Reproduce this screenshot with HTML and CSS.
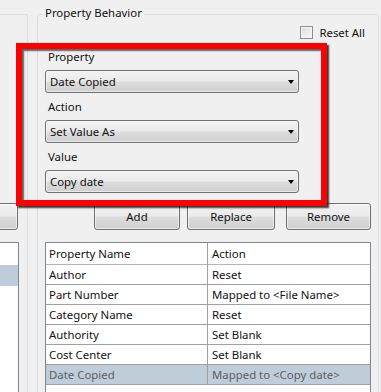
FILE: index.html
```html
<!DOCTYPE html>
<html>
<head>
<meta charset="utf-8">
<link rel="stylesheet" href="styles.css">
</head>
<body>
<div class="screen">
  <div class="left-group">
    <div class="win-btn left-btn"></div>
    <div class="left-list">
      <div class="ll-head"></div>
      <div class="ll-row selected"></div>
    </div>
  </div>

  <div class="group">
    <span class="legend">Property Behavior</span>
    <div class="reset-row">
      <span class="checkbox"></span>
      <span class="reset-text">Reset All</span>
    </div>

    <div class="field-label">Property</div>
    <div class="combo"><span class="combo-text">Date Copied</span><span class="arrow"></span></div>

    <div class="field-label">Action</div>
    <div class="combo"><span class="combo-text">Set Value As</span><span class="arrow"></span></div>

    <div class="field-label">Value</div>
    <div class="combo"><span class="combo-text">Copy date</span><span class="arrow"></span></div>

    <div class="buttons">
      <div class="win-btn btn-add">Add</div>
      <div class="win-btn btn-replace">Replace</div>
      <div class="win-btn btn-remove">Remove</div>
    </div>

    <div class="grid">
      <table>
        <colgroup><col class="col-name"><col class="col-action"></colgroup>
        <thead>
          <tr><th>Property Name</th><th>Action</th></tr>
        </thead>
        <tbody>
          <tr><td>Author</td><td>Reset</td></tr>
          <tr><td>Part Number</td><td>Mapped to &lt;File Name&gt;</td></tr>
          <tr><td>Category Name</td><td>Reset</td></tr>
          <tr><td>Authority</td><td>Set Blank</td></tr>
          <tr><td>Cost Center</td><td>Set Blank</td></tr>
          <tr class="selected"><td>Date Copied</td><td>Mapped to &lt;Copy date&gt;</td></tr>
        </tbody>
      </table>
    </div>
  </div>

  <div class="highlight"></div>
</div>
</body>
</html>
```

FILE: styles.css
```css
html, body {
  margin: 0;
  padding: 0;
  background: #f0f0f0;
}

.screen {
  position: relative;
  width: 381px;
  height: 392px;
  overflow: hidden;
  background: #f0f0f0;
  display: flex;
  align-items: flex-start;
  gap: 9px;
  font-family: "Noto Sans", "Open Sans", sans-serif;
  font-size: 11.4px;
  color: #111;
}

/* ---------- left (cut-off) group ---------- */
.left-group {
  flex: none;
  width: 28px;
  height: 400px;
  margin-top: 14px;
  box-sizing: border-box;
  border-top: 1px solid #d5dfe5;
  border-right: 1px solid #d5dfe5;
  border-top-right-radius: 3px;
}

.left-btn {
  margin-top: 188px;
  margin-left: -20px;
  width: 38px;
  height: 27px;
}

.left-list {
  margin-top: 12px;
  margin-left: -20px;
  width: 39px;
  height: 200px;
  box-sizing: border-box;
  background: #fff;
  border: 1px solid #828790;
}

.ll-head {
  height: 22px;
}

.ll-row {
  height: 21px;
}

.ll-row.selected {
  background: #bfcddb;
}

/* ---------- Property Behavior group ---------- */
.group {
  position: relative;
  flex: none;
  width: 342px;
  height: 400px;
  margin-top: 14px;
  box-sizing: border-box;
  border: 1px solid #d5dfe5;
  border-radius: 3px;
  padding: 11px 7px 0 7px;
}

.legend {
  position: absolute;
  top: -10px;
  left: 5px;
  padding: 0 2px;
  line-height: 15px;
  background: #f0f0f0;
}

.reset-row {
  display: flex;
  justify-content: flex-end;
  align-items: center;
  height: 13px;
  padding-right: 6px;
}

.checkbox {
  width: 13px;
  height: 13px;
  box-sizing: border-box;
  border: 1px solid #8e8f8f;
  background: linear-gradient(135deg, #d8dade 0%, #eeeeee 60%, #fbfbfb 100%);
  box-shadow: inset 0 0 0 1px #f4f4f4;
  margin-right: 6px;
}

.reset-text {
  line-height: 13px;
}

.field-label {
  margin: 10px 0 6px 3px;
  line-height: 15px;
}

.combo + .field-label {
  margin-top: 6px;
}

.win-btn,
.combo {
  box-sizing: border-box;
  border: 1px solid #707070;
  border-radius: 3px;
  background: linear-gradient(to bottom, #f2f2f2 0%, #ebebeb 48%, #dddddd 52%, #cfcfcf 100%);
  box-shadow: inset 0 0 0 1px rgba(255, 255, 255, 0.55);
}

.combo {
  display: flex;
  align-items: center;
  justify-content: space-between;
  width: 254px;
  height: 23px;
  padding: 0 4px 0 4px;
  line-height: 21px;
}

.arrow {
  width: 0;
  height: 0;
  border-left: 3.5px solid transparent;
  border-right: 3.5px solid transparent;
  border-top: 4px solid #000;
  margin-top: 1px;
}

.buttons {
  display: flex;
  justify-content: flex-end;
  margin-top: 10px;
  height: 27px;
}

.buttons .win-btn {
  height: 27px;
  line-height: 25px;
  text-align: center;
}

.btn-add { width: 86px; margin-right: 7px; }
.btn-replace { width: 88px; margin-right: 11px; }
.btn-remove { width: 85px; }

/* ---------- grid ---------- */
.grid {
  margin-top: 12px;
  width: 326px;
  height: 200px;
  box-sizing: border-box;
  background: #fff;
  border: 1px solid #828790;
  overflow: hidden;
}

.grid table {
  width: 100%;
  table-layout: fixed;
  border-collapse: separate;
  border-spacing: 0;
  font-size: 11.4px;
}

.col-name { width: 162px; }

.grid th,
.grid td {
  padding: 0 0 0 3px;
  text-align: left;
  font-weight: normal;
  white-space: nowrap;
  overflow: hidden;
  border-bottom: 1px solid #a0a0a0;
  color: #111;
}

.grid th:first-child,
.grid td:first-child {
  border-right: 1px solid #a0a0a0;
}

.grid th:last-child,
.grid td:last-child {
  padding-left: 4px;
}

.grid th {
  height: 21px;
  line-height: 21px;
  border-bottom-color: #b5b5b5;
}

.grid td {
  height: 19px;
  line-height: 19px;
}

.grid tr.selected td {
  background: #bfcddb;
  color: #5e5e5e;
}

/* ---------- red annotation frame ---------- */
.highlight {
  position: absolute;
  left: 16px;
  top: 43px;
  width: 311px;
  height: 163px;
  box-sizing: border-box;
  border: 6px solid #ff0000;
  box-shadow: 2px 2px 1.5px rgba(0, 0, 0, 0.75), inset 2px 2px 1.5px rgba(0, 0, 0, 0.6);
  pointer-events: none;
}
```
